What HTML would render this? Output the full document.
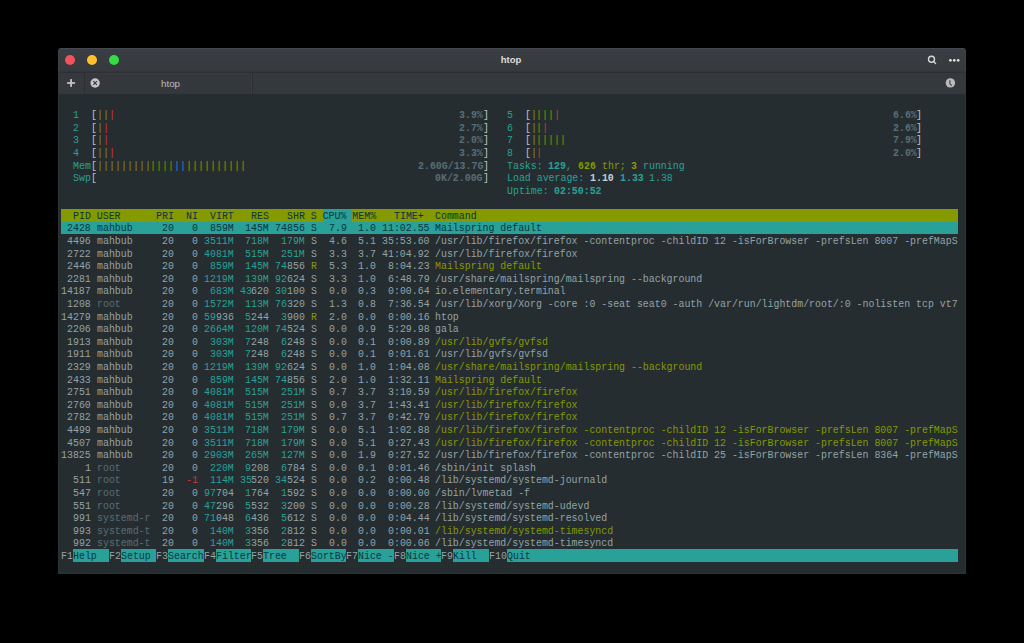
<!DOCTYPE html>
<html><head><meta charset="utf-8">
<style>
html,body{margin:0;padding:0;}
body{width:1024px;height:643px;background:#000;position:relative;overflow:hidden;font-family:"Liberation Sans",sans-serif;}
#win{position:absolute;left:58px;top:48px;width:908px;height:526px;background:#252d31;border-radius:4px 4px 0 0;overflow:hidden;box-shadow:inset 1px 0 0 #2c3336, inset -1px 0 0 #2c3336, inset 0 -1px 0 #2c3336;}
#title{position:absolute;left:0;top:0;width:908px;height:24px;background:linear-gradient(#3a3d42,#36393e);box-shadow:inset 0 1px 0 #444850, inset -1px 0 0 #3e4147, inset 1px 0 0 #3e4147;}
#tline{position:absolute;left:0;top:24px;width:908px;height:1px;background:#2d2f33;box-shadow:0 -0.5px 0.5px #313338;}
#tabs{position:absolute;left:0;top:25px;width:908px;height:21px;background:#35383c;}
#tab{position:absolute;left:27px;top:0;width:167px;height:21px;background:#34373b;box-shadow:inset 0 1px 0 #393c41, inset -1px 0 0 #3a3d42;border-radius:0 2px 0 0;}
#sep1{position:absolute;left:26px;top:0;width:1px;height:21px;background:#2c2e32;}
#sep2{position:absolute;left:194px;top:0;width:1px;height:21px;background:#2c2e32;}
.dot{position:absolute;width:10.6px;height:10.6px;border-radius:50%;top:6.7px;}
.ttl{position:absolute;left:-1px;width:908px;top:5.4px;text-align:center;color:#dedede;font-weight:bold;font-size:9.5px;line-height:14px;}
.tabl{position:absolute;left:103px;top:4.1px;color:#bdbdbd;font-size:9.8px;line-height:14px;}
.b{position:absolute;height:12.59px;}
.t{position:absolute;margin-top:0.8px;white-space:pre;font-family:"Liberation Mono",monospace;font-size:11px;line-height:12.59px;height:12.59px;overflow:visible;transform-origin:0 0;transform:scaleX(0.8996);}
.bd{font-weight:bold;}
svg{position:absolute;overflow:visible;}
</style></head><body>
<div id="win">
 <div id="title">
  <div class="dot" style="left:6.5px;background:#f4515a"></div>
  <div class="dot" style="left:28.7px;background:#fcc02c"></div>
  <div class="dot" style="left:50.9px;background:#33dd43"></div>
  <div class="ttl">htop</div>
  <svg style="left:0;top:0" width="908" height="24">
   <circle cx="873.5" cy="11.3" r="3.0" fill="none" stroke="#d6d6d6" stroke-width="1.4"/>
   <line x1="875.7" y1="13.5" x2="877.6" y2="15.6" stroke="#d6d6d6" stroke-width="1.4" stroke-linecap="round"/>
   <circle cx="892.4" cy="12.3" r="1.35" fill="#e0e0e0"/>
   <circle cx="896.3" cy="12.3" r="1.35" fill="#e0e0e0"/>
   <circle cx="900.2" cy="12.3" r="1.35" fill="#e0e0e0"/>
  </svg>
 </div>
 <div id="tline"></div>
 <div id="tabs">
  <div id="sep1"></div>
  <div id="tab"></div>
  <div id="sep2"></div>
  <div class="tabl">htop</div>
  <svg style="left:0;top:0" width="908" height="21">
   <rect x="9.1" y="9.1" width="8" height="1.8" fill="#c2c2c2"/>
   <rect x="12.2" y="6.1" width="1.8" height="7.8" fill="#c2c2c2"/>
   <circle cx="37.1" cy="10" r="4.7" fill="#c4c4c4"/>
   <line x1="35.3" y1="8.2" x2="38.9" y2="11.8" stroke="#35383c" stroke-width="1.1"/>
   <line x1="38.9" y1="8.2" x2="35.3" y2="11.8" stroke="#35383c" stroke-width="1.1"/>
   <circle cx="892.4" cy="9.9" r="4.7" fill="#bababa"/>
   <path d="M891.9 7.2 V10.8 L893.8 12.6" fill="none" stroke="#3a3d41" stroke-width="1.1"/>
  </svg>
 </div>
</div>
<div class="b" style="left:61.40px;top:209.10px;width:896.64px;background:#859900"></div>
<div class="b" style="left:322.67px;top:209.10px;width:29.69px;background:#2aa198"></div>
<div class="b" style="left:61.40px;top:221.70px;width:896.64px;background:#2aa198"></div>
<div class="b" style="left:73.28px;top:549.20px;width:35.63px;background:#2aa198"></div>
<div class="b" style="left:120.78px;top:549.20px;width:35.63px;background:#2aa198"></div>
<div class="b" style="left:168.28px;top:549.20px;width:35.63px;background:#2aa198"></div>
<div class="b" style="left:215.79px;top:549.20px;width:35.63px;background:#2aa198"></div>
<div class="b" style="left:263.29px;top:549.20px;width:35.63px;background:#2aa198"></div>
<div class="b" style="left:310.80px;top:549.20px;width:35.63px;background:#2aa198"></div>
<div class="b" style="left:358.30px;top:549.20px;width:35.63px;background:#2aa198"></div>
<div class="b" style="left:405.80px;top:549.20px;width:35.63px;background:#2aa198"></div>
<div class="b" style="left:453.31px;top:549.20px;width:35.63px;background:#2aa198"></div>
<div class="b" style="left:506.75px;top:549.20px;width:451.29px;background:#2aa198"></div>
<span class="t" style="left:73.28px;top:108.34px;color:#2aa198;width:5.94px">1</span>
<span class="t" style="left:91.09px;top:108.34px;color:#bcc4c6;width:5.94px">[</span>
<span class="t" style="left:97.03px;top:108.34px;color:#859900;width:5.94px">|</span>
<span class="t" style="left:102.97px;top:108.34px;color:#859900;width:5.94px">|</span>
<span class="t" style="left:108.90px;top:108.34px;color:#dc322f;width:5.94px">|</span>
<span class="t bd" style="left:459.25px;top:108.34px;color:#586e75;width:23.75px">3.9%</span>
<span class="t" style="left:483.00px;top:108.34px;color:#bcc4c6;width:5.94px">]</span>
<span class="t" style="left:506.75px;top:108.34px;color:#2aa198;width:5.94px">5</span>
<span class="t" style="left:524.56px;top:108.34px;color:#bcc4c6;width:5.94px">[</span>
<span class="t" style="left:530.50px;top:108.34px;color:#859900;width:5.94px">|</span>
<span class="t" style="left:536.44px;top:108.34px;color:#859900;width:5.94px">|</span>
<span class="t" style="left:542.38px;top:108.34px;color:#859900;width:5.94px">|</span>
<span class="t" style="left:548.32px;top:108.34px;color:#859900;width:5.94px">|</span>
<span class="t" style="left:554.25px;top:108.34px;color:#dc322f;width:5.94px">|</span>
<span class="t bd" style="left:892.72px;top:108.34px;color:#586e75;width:23.75px">6.6%</span>
<span class="t" style="left:916.47px;top:108.34px;color:#bcc4c6;width:5.94px">]</span>
<span class="t" style="left:73.28px;top:120.93px;color:#2aa198;width:5.94px">2</span>
<span class="t" style="left:91.09px;top:120.93px;color:#bcc4c6;width:5.94px">[</span>
<span class="t" style="left:97.03px;top:120.93px;color:#859900;width:5.94px">|</span>
<span class="t" style="left:102.97px;top:120.93px;color:#dc322f;width:5.94px">|</span>
<span class="t bd" style="left:459.25px;top:120.93px;color:#586e75;width:23.75px">2.7%</span>
<span class="t" style="left:483.00px;top:120.93px;color:#bcc4c6;width:5.94px">]</span>
<span class="t" style="left:506.75px;top:120.93px;color:#2aa198;width:5.94px">6</span>
<span class="t" style="left:524.56px;top:120.93px;color:#bcc4c6;width:5.94px">[</span>
<span class="t" style="left:530.50px;top:120.93px;color:#859900;width:5.94px">|</span>
<span class="t" style="left:536.44px;top:120.93px;color:#859900;width:5.94px">|</span>
<span class="t" style="left:542.38px;top:120.93px;color:#dc322f;width:5.94px">|</span>
<span class="t bd" style="left:892.72px;top:120.93px;color:#586e75;width:23.75px">2.6%</span>
<span class="t" style="left:916.47px;top:120.93px;color:#bcc4c6;width:5.94px">]</span>
<span class="t" style="left:73.28px;top:133.53px;color:#2aa198;width:5.94px">3</span>
<span class="t" style="left:91.09px;top:133.53px;color:#bcc4c6;width:5.94px">[</span>
<span class="t" style="left:97.03px;top:133.53px;color:#859900;width:5.94px">|</span>
<span class="t" style="left:102.97px;top:133.53px;color:#dc322f;width:5.94px">|</span>
<span class="t bd" style="left:459.25px;top:133.53px;color:#586e75;width:23.75px">2.0%</span>
<span class="t" style="left:483.00px;top:133.53px;color:#bcc4c6;width:5.94px">]</span>
<span class="t" style="left:506.75px;top:133.53px;color:#2aa198;width:5.94px">7</span>
<span class="t" style="left:524.56px;top:133.53px;color:#bcc4c6;width:5.94px">[</span>
<span class="t" style="left:530.50px;top:133.53px;color:#859900;width:5.94px">|</span>
<span class="t" style="left:536.44px;top:133.53px;color:#859900;width:5.94px">|</span>
<span class="t" style="left:542.38px;top:133.53px;color:#859900;width:5.94px">|</span>
<span class="t" style="left:548.32px;top:133.53px;color:#859900;width:5.94px">|</span>
<span class="t" style="left:554.25px;top:133.53px;color:#859900;width:5.94px">|</span>
<span class="t" style="left:560.19px;top:133.53px;color:#859900;width:5.94px">|</span>
<span class="t bd" style="left:892.72px;top:133.53px;color:#586e75;width:23.75px">7.9%</span>
<span class="t" style="left:916.47px;top:133.53px;color:#bcc4c6;width:5.94px">]</span>
<span class="t" style="left:73.28px;top:146.12px;color:#2aa198;width:5.94px">4</span>
<span class="t" style="left:91.09px;top:146.12px;color:#bcc4c6;width:5.94px">[</span>
<span class="t" style="left:97.03px;top:146.12px;color:#859900;width:5.94px">|</span>
<span class="t" style="left:102.97px;top:146.12px;color:#859900;width:5.94px">|</span>
<span class="t" style="left:108.90px;top:146.12px;color:#dc322f;width:5.94px">|</span>
<span class="t bd" style="left:459.25px;top:146.12px;color:#586e75;width:23.75px">3.3%</span>
<span class="t" style="left:483.00px;top:146.12px;color:#bcc4c6;width:5.94px">]</span>
<span class="t" style="left:506.75px;top:146.12px;color:#2aa198;width:5.94px">8</span>
<span class="t" style="left:524.56px;top:146.12px;color:#bcc4c6;width:5.94px">[</span>
<span class="t" style="left:530.50px;top:146.12px;color:#859900;width:5.94px">|</span>
<span class="t" style="left:536.44px;top:146.12px;color:#dc322f;width:5.94px">|</span>
<span class="t bd" style="left:892.72px;top:146.12px;color:#586e75;width:23.75px">2.0%</span>
<span class="t" style="left:916.47px;top:146.12px;color:#bcc4c6;width:5.94px">]</span>
<span class="t" style="left:73.28px;top:158.72px;color:#2aa198;width:17.81px">Mem</span>
<span class="t" style="left:91.09px;top:158.72px;color:#bcc4c6;width:5.94px">[</span>
<span class="t" style="left:97.03px;top:158.72px;color:#859900;width:5.94px">|</span>
<span class="t" style="left:102.97px;top:158.72px;color:#859900;width:5.94px">|</span>
<span class="t" style="left:108.90px;top:158.72px;color:#859900;width:5.94px">|</span>
<span class="t" style="left:114.84px;top:158.72px;color:#859900;width:5.94px">|</span>
<span class="t" style="left:120.78px;top:158.72px;color:#859900;width:5.94px">|</span>
<span class="t" style="left:126.72px;top:158.72px;color:#859900;width:5.94px">|</span>
<span class="t" style="left:132.66px;top:158.72px;color:#859900;width:5.94px">|</span>
<span class="t" style="left:138.59px;top:158.72px;color:#859900;width:5.94px">|</span>
<span class="t" style="left:144.53px;top:158.72px;color:#859900;width:5.94px">|</span>
<span class="t" style="left:150.47px;top:158.72px;color:#859900;width:5.94px">|</span>
<span class="t" style="left:156.41px;top:158.72px;color:#859900;width:5.94px">|</span>
<span class="t" style="left:162.35px;top:158.72px;color:#859900;width:5.94px">|</span>
<span class="t" style="left:168.28px;top:158.72px;color:#859900;width:5.94px">|</span>
<span class="t" style="left:174.22px;top:158.72px;color:#268bd2;width:5.94px">|</span>
<span class="t" style="left:180.16px;top:158.72px;color:#268bd2;width:5.94px">|</span>
<span class="t" style="left:186.10px;top:158.72px;color:#b58900;width:5.94px">|</span>
<span class="t" style="left:192.04px;top:158.72px;color:#b58900;width:5.94px">|</span>
<span class="t" style="left:197.97px;top:158.72px;color:#b58900;width:5.94px">|</span>
<span class="t" style="left:203.91px;top:158.72px;color:#b58900;width:5.94px">|</span>
<span class="t" style="left:209.85px;top:158.72px;color:#b58900;width:5.94px">|</span>
<span class="t" style="left:215.79px;top:158.72px;color:#b58900;width:5.94px">|</span>
<span class="t" style="left:221.73px;top:158.72px;color:#b58900;width:5.94px">|</span>
<span class="t" style="left:227.66px;top:158.72px;color:#b58900;width:5.94px">|</span>
<span class="t" style="left:233.60px;top:158.72px;color:#b58900;width:5.94px">|</span>
<span class="t" style="left:239.54px;top:158.72px;color:#b58900;width:5.94px">|</span>
<span class="t bd" style="left:417.68px;top:158.72px;color:#586e75;width:65.32px">2.60G/13.7G</span>
<span class="t" style="left:483.00px;top:158.72px;color:#bcc4c6;width:5.94px">]</span>
<span class="t" style="left:506.75px;top:158.72px;color:#2aa198;width:35.63px">Tasks:</span>
<span class="t bd" style="left:548.32px;top:158.72px;color:#2aa198;width:17.81px">129</span>
<span class="t" style="left:566.13px;top:158.72px;color:#2aa198;width:5.94px">,</span>
<span class="t bd" style="left:578.01px;top:158.72px;color:#859900;width:17.81px">626</span>
<span class="t" style="left:601.76px;top:158.72px;color:#859900;width:23.75px">thr;</span>
<span class="t bd" style="left:631.45px;top:158.72px;color:#859900;width:5.94px">3</span>
<span class="t" style="left:643.32px;top:158.72px;color:#2aa198;width:41.57px">running</span>
<span class="t" style="left:73.28px;top:171.32px;color:#2aa198;width:17.81px">Swp</span>
<span class="t" style="left:91.09px;top:171.32px;color:#bcc4c6;width:5.94px">[</span>
<span class="t bd" style="left:435.49px;top:171.32px;color:#586e75;width:47.50px">0K/2.00G</span>
<span class="t" style="left:483.00px;top:171.32px;color:#bcc4c6;width:5.94px">]</span>
<span class="t" style="left:506.75px;top:171.32px;color:#2aa198;width:77.19px">Load average:</span>
<span class="t bd" style="left:589.88px;top:171.32px;color:#c9d1d3;width:23.75px">1.10</span>
<span class="t bd" style="left:619.57px;top:171.32px;color:#2aa198;width:23.75px">1.33</span>
<span class="t" style="left:649.26px;top:171.32px;color:#2aa198;width:23.75px">1.38</span>
<span class="t" style="left:506.75px;top:183.91px;color:#2aa198;width:41.57px">Uptime:</span>
<span class="t bd" style="left:554.25px;top:183.91px;color:#2aa198;width:47.50px">02:50:52</span>
<span class="t" style="left:73.28px;top:209.10px;color:#073642;width:47.50px">PID USER</span>
<span class="t" style="left:156.41px;top:209.10px;color:#073642;width:17.81px">PRI</span>
<span class="t" style="left:186.10px;top:209.10px;color:#073642;width:11.88px">NI</span>
<span class="t" style="left:209.85px;top:209.10px;color:#073642;width:23.75px">VIRT</span>
<span class="t" style="left:251.42px;top:209.10px;color:#073642;width:17.81px">RES</span>
<span class="t" style="left:287.04px;top:209.10px;color:#073642;width:89.07px">SHR S CPU% MEM%</span>
<span class="t" style="left:393.93px;top:209.10px;color:#073642;width:29.69px">TIME+</span>
<span class="t" style="left:435.49px;top:209.10px;color:#073642;width:41.57px">Command</span>
<span class="t" style="left:67.34px;top:221.70px;color:#073642;width:23.75px">2428</span>
<span class="t" style="left:97.03px;top:221.70px;color:#073642;width:35.63px">mahbub</span>
<span class="t" style="left:162.35px;top:221.70px;color:#073642;width:11.88px">20</span>
<span class="t" style="left:192.04px;top:221.70px;color:#073642;width:5.94px">0</span>
<span class="t" style="left:209.85px;top:221.70px;color:#073642;width:23.75px">859M</span>
<span class="t" style="left:245.48px;top:221.70px;color:#073642;width:23.75px">145M</span>
<span class="t" style="left:275.17px;top:221.70px;color:#073642;width:11.88px">74</span>
<span class="t" style="left:287.04px;top:221.70px;color:#073642;width:17.81px">856</span>
<span class="t" style="left:310.80px;top:221.70px;color:#073642;width:5.94px">S</span>
<span class="t" style="left:328.61px;top:221.70px;color:#073642;width:17.81px">7.9</span>
<span class="t" style="left:358.30px;top:221.70px;color:#073642;width:17.81px">1.0</span>
<span class="t" style="left:382.05px;top:221.70px;color:#073642;width:47.50px">11:02.55</span>
<span class="t" style="left:435.49px;top:221.70px;color:#073642;width:106.88px">Mailspring default</span>
<span class="t" style="left:67.34px;top:234.30px;color:#94a3a5;width:23.75px">4496</span>
<span class="t" style="left:97.03px;top:234.30px;color:#94a3a5;width:35.63px">mahbub</span>
<span class="t" style="left:162.35px;top:234.30px;color:#94a3a5;width:11.88px">20</span>
<span class="t" style="left:192.04px;top:234.30px;color:#94a3a5;width:5.94px">0</span>
<span class="t" style="left:203.91px;top:234.30px;color:#2aa198;width:29.69px">3511M</span>
<span class="t" style="left:245.48px;top:234.30px;color:#2aa198;width:23.75px">718M</span>
<span class="t" style="left:281.11px;top:234.30px;color:#2aa198;width:23.75px">179M</span>
<span class="t" style="left:310.80px;top:234.30px;color:#94a3a5;width:5.94px">S</span>
<span class="t" style="left:328.61px;top:234.30px;color:#94a3a5;width:17.81px">4.6</span>
<span class="t" style="left:358.30px;top:234.30px;color:#94a3a5;width:17.81px">5.1</span>
<span class="t" style="left:382.05px;top:234.30px;color:#94a3a5;width:47.50px">35:53.60</span>
<span class="t" style="left:435.49px;top:234.30px;color:#94a3a5;width:522.54px">/usr/lib/firefox/firefox -contentproc -childID 12 -isForBrowser -prefsLen 8007 -prefMapS</span>
<span class="t" style="left:67.34px;top:246.89px;color:#94a3a5;width:23.75px">2722</span>
<span class="t" style="left:97.03px;top:246.89px;color:#94a3a5;width:35.63px">mahbub</span>
<span class="t" style="left:162.35px;top:246.89px;color:#94a3a5;width:11.88px">20</span>
<span class="t" style="left:192.04px;top:246.89px;color:#94a3a5;width:5.94px">0</span>
<span class="t" style="left:203.91px;top:246.89px;color:#2aa198;width:29.69px">4081M</span>
<span class="t" style="left:245.48px;top:246.89px;color:#2aa198;width:23.75px">515M</span>
<span class="t" style="left:281.11px;top:246.89px;color:#2aa198;width:23.75px">251M</span>
<span class="t" style="left:310.80px;top:246.89px;color:#94a3a5;width:5.94px">S</span>
<span class="t" style="left:328.61px;top:246.89px;color:#94a3a5;width:17.81px">3.3</span>
<span class="t" style="left:358.30px;top:246.89px;color:#94a3a5;width:17.81px">3.7</span>
<span class="t" style="left:382.05px;top:246.89px;color:#94a3a5;width:47.50px">41:04.92</span>
<span class="t" style="left:435.49px;top:246.89px;color:#94a3a5;width:142.51px">/usr/lib/firefox/firefox</span>
<span class="t" style="left:67.34px;top:259.49px;color:#94a3a5;width:23.75px">2446</span>
<span class="t" style="left:97.03px;top:259.49px;color:#94a3a5;width:35.63px">mahbub</span>
<span class="t" style="left:162.35px;top:259.49px;color:#94a3a5;width:11.88px">20</span>
<span class="t" style="left:192.04px;top:259.49px;color:#94a3a5;width:5.94px">0</span>
<span class="t" style="left:209.85px;top:259.49px;color:#2aa198;width:23.75px">859M</span>
<span class="t" style="left:245.48px;top:259.49px;color:#2aa198;width:23.75px">145M</span>
<span class="t" style="left:275.17px;top:259.49px;color:#2aa198;width:11.88px">74</span>
<span class="t" style="left:287.04px;top:259.49px;color:#94a3a5;width:17.81px">856</span>
<span class="t" style="left:310.80px;top:259.49px;color:#859900;width:5.94px">R</span>
<span class="t" style="left:328.61px;top:259.49px;color:#94a3a5;width:17.81px">5.3</span>
<span class="t" style="left:358.30px;top:259.49px;color:#94a3a5;width:17.81px">1.0</span>
<span class="t" style="left:387.99px;top:259.49px;color:#94a3a5;width:41.57px">8:04.23</span>
<span class="t" style="left:435.49px;top:259.49px;color:#859900;width:106.88px">Mailspring default</span>
<span class="t" style="left:67.34px;top:272.08px;color:#94a3a5;width:23.75px">2281</span>
<span class="t" style="left:97.03px;top:272.08px;color:#94a3a5;width:35.63px">mahbub</span>
<span class="t" style="left:162.35px;top:272.08px;color:#94a3a5;width:11.88px">20</span>
<span class="t" style="left:192.04px;top:272.08px;color:#94a3a5;width:5.94px">0</span>
<span class="t" style="left:203.91px;top:272.08px;color:#2aa198;width:29.69px">1219M</span>
<span class="t" style="left:245.48px;top:272.08px;color:#2aa198;width:23.75px">139M</span>
<span class="t" style="left:275.17px;top:272.08px;color:#2aa198;width:11.88px">92</span>
<span class="t" style="left:287.04px;top:272.08px;color:#94a3a5;width:17.81px">624</span>
<span class="t" style="left:310.80px;top:272.08px;color:#94a3a5;width:5.94px">S</span>
<span class="t" style="left:328.61px;top:272.08px;color:#94a3a5;width:17.81px">3.3</span>
<span class="t" style="left:358.30px;top:272.08px;color:#94a3a5;width:17.81px">1.0</span>
<span class="t" style="left:387.99px;top:272.08px;color:#94a3a5;width:41.57px">6:48.79</span>
<span class="t" style="left:435.49px;top:272.08px;color:#94a3a5;width:267.21px">/usr/share/mailspring/mailspring --background</span>
<span class="t" style="left:61.40px;top:284.68px;color:#94a3a5;width:29.69px">14187</span>
<span class="t" style="left:97.03px;top:284.68px;color:#94a3a5;width:35.63px">mahbub</span>
<span class="t" style="left:162.35px;top:284.68px;color:#94a3a5;width:11.88px">20</span>
<span class="t" style="left:192.04px;top:284.68px;color:#94a3a5;width:5.94px">0</span>
<span class="t" style="left:209.85px;top:284.68px;color:#2aa198;width:23.75px">683M</span>
<span class="t" style="left:239.54px;top:284.68px;color:#2aa198;width:11.88px">43</span>
<span class="t" style="left:251.42px;top:284.68px;color:#94a3a5;width:17.81px">620</span>
<span class="t" style="left:275.17px;top:284.68px;color:#2aa198;width:11.88px">30</span>
<span class="t" style="left:287.04px;top:284.68px;color:#94a3a5;width:17.81px">100</span>
<span class="t" style="left:310.80px;top:284.68px;color:#94a3a5;width:5.94px">S</span>
<span class="t" style="left:328.61px;top:284.68px;color:#94a3a5;width:17.81px">0.0</span>
<span class="t" style="left:358.30px;top:284.68px;color:#94a3a5;width:17.81px">0.3</span>
<span class="t" style="left:387.99px;top:284.68px;color:#94a3a5;width:41.57px">0:00.64</span>
<span class="t" style="left:435.49px;top:284.68px;color:#94a3a5;width:130.64px">io.elementary.terminal</span>
<span class="t" style="left:67.34px;top:297.28px;color:#94a3a5;width:23.75px">1208</span>
<span class="t" style="left:97.03px;top:297.28px;color:#586e75;width:23.75px">root</span>
<span class="t" style="left:162.35px;top:297.28px;color:#94a3a5;width:11.88px">20</span>
<span class="t" style="left:192.04px;top:297.28px;color:#94a3a5;width:5.94px">0</span>
<span class="t" style="left:203.91px;top:297.28px;color:#2aa198;width:29.69px">1572M</span>
<span class="t" style="left:245.48px;top:297.28px;color:#2aa198;width:23.75px">113M</span>
<span class="t" style="left:275.17px;top:297.28px;color:#2aa198;width:11.88px">76</span>
<span class="t" style="left:287.04px;top:297.28px;color:#94a3a5;width:17.81px">320</span>
<span class="t" style="left:310.80px;top:297.28px;color:#94a3a5;width:5.94px">S</span>
<span class="t" style="left:328.61px;top:297.28px;color:#94a3a5;width:17.81px">1.3</span>
<span class="t" style="left:358.30px;top:297.28px;color:#94a3a5;width:17.81px">0.8</span>
<span class="t" style="left:387.99px;top:297.28px;color:#94a3a5;width:41.57px">7:36.54</span>
<span class="t" style="left:435.49px;top:297.28px;color:#94a3a5;width:522.54px">/usr/lib/xorg/Xorg -core :0 -seat seat0 -auth /var/run/lightdm/root/:0 -nolisten tcp vt7</span>
<span class="t" style="left:61.40px;top:309.87px;color:#94a3a5;width:29.69px">14279</span>
<span class="t" style="left:97.03px;top:309.87px;color:#94a3a5;width:35.63px">mahbub</span>
<span class="t" style="left:162.35px;top:309.87px;color:#94a3a5;width:11.88px">20</span>
<span class="t" style="left:192.04px;top:309.87px;color:#94a3a5;width:5.94px">0</span>
<span class="t" style="left:203.91px;top:309.87px;color:#2aa198;width:11.88px">59</span>
<span class="t" style="left:215.79px;top:309.87px;color:#94a3a5;width:17.81px">936</span>
<span class="t" style="left:245.48px;top:309.87px;color:#2aa198;width:5.94px">5</span>
<span class="t" style="left:251.42px;top:309.87px;color:#94a3a5;width:17.81px">244</span>
<span class="t" style="left:281.11px;top:309.87px;color:#2aa198;width:5.94px">3</span>
<span class="t" style="left:287.04px;top:309.87px;color:#94a3a5;width:17.81px">900</span>
<span class="t" style="left:310.80px;top:309.87px;color:#859900;width:5.94px">R</span>
<span class="t" style="left:328.61px;top:309.87px;color:#94a3a5;width:17.81px">2.0</span>
<span class="t" style="left:358.30px;top:309.87px;color:#94a3a5;width:17.81px">0.0</span>
<span class="t" style="left:387.99px;top:309.87px;color:#94a3a5;width:41.57px">0:00.16</span>
<span class="t" style="left:435.49px;top:309.87px;color:#94a3a5;width:23.75px">htop</span>
<span class="t" style="left:67.34px;top:322.47px;color:#94a3a5;width:23.75px">2206</span>
<span class="t" style="left:97.03px;top:322.47px;color:#94a3a5;width:35.63px">mahbub</span>
<span class="t" style="left:162.35px;top:322.47px;color:#94a3a5;width:11.88px">20</span>
<span class="t" style="left:192.04px;top:322.47px;color:#94a3a5;width:5.94px">0</span>
<span class="t" style="left:203.91px;top:322.47px;color:#2aa198;width:29.69px">2664M</span>
<span class="t" style="left:245.48px;top:322.47px;color:#2aa198;width:23.75px">120M</span>
<span class="t" style="left:275.17px;top:322.47px;color:#2aa198;width:11.88px">74</span>
<span class="t" style="left:287.04px;top:322.47px;color:#94a3a5;width:17.81px">524</span>
<span class="t" style="left:310.80px;top:322.47px;color:#94a3a5;width:5.94px">S</span>
<span class="t" style="left:328.61px;top:322.47px;color:#94a3a5;width:17.81px">0.0</span>
<span class="t" style="left:358.30px;top:322.47px;color:#94a3a5;width:17.81px">0.9</span>
<span class="t" style="left:387.99px;top:322.47px;color:#94a3a5;width:41.57px">5:29.98</span>
<span class="t" style="left:435.49px;top:322.47px;color:#94a3a5;width:23.75px">gala</span>
<span class="t" style="left:67.34px;top:335.06px;color:#94a3a5;width:23.75px">1913</span>
<span class="t" style="left:97.03px;top:335.06px;color:#94a3a5;width:35.63px">mahbub</span>
<span class="t" style="left:162.35px;top:335.06px;color:#94a3a5;width:11.88px">20</span>
<span class="t" style="left:192.04px;top:335.06px;color:#94a3a5;width:5.94px">0</span>
<span class="t" style="left:209.85px;top:335.06px;color:#2aa198;width:23.75px">303M</span>
<span class="t" style="left:245.48px;top:335.06px;color:#2aa198;width:5.94px">7</span>
<span class="t" style="left:251.42px;top:335.06px;color:#94a3a5;width:17.81px">248</span>
<span class="t" style="left:281.11px;top:335.06px;color:#2aa198;width:5.94px">6</span>
<span class="t" style="left:287.04px;top:335.06px;color:#94a3a5;width:17.81px">248</span>
<span class="t" style="left:310.80px;top:335.06px;color:#94a3a5;width:5.94px">S</span>
<span class="t" style="left:328.61px;top:335.06px;color:#94a3a5;width:17.81px">0.0</span>
<span class="t" style="left:358.30px;top:335.06px;color:#94a3a5;width:17.81px">0.1</span>
<span class="t" style="left:387.99px;top:335.06px;color:#94a3a5;width:41.57px">0:00.89</span>
<span class="t" style="left:435.49px;top:335.06px;color:#859900;width:112.82px">/usr/lib/gvfs/gvfsd</span>
<span class="t" style="left:67.34px;top:347.66px;color:#94a3a5;width:23.75px">1911</span>
<span class="t" style="left:97.03px;top:347.66px;color:#94a3a5;width:35.63px">mahbub</span>
<span class="t" style="left:162.35px;top:347.66px;color:#94a3a5;width:11.88px">20</span>
<span class="t" style="left:192.04px;top:347.66px;color:#94a3a5;width:5.94px">0</span>
<span class="t" style="left:209.85px;top:347.66px;color:#2aa198;width:23.75px">303M</span>
<span class="t" style="left:245.48px;top:347.66px;color:#2aa198;width:5.94px">7</span>
<span class="t" style="left:251.42px;top:347.66px;color:#94a3a5;width:17.81px">248</span>
<span class="t" style="left:281.11px;top:347.66px;color:#2aa198;width:5.94px">6</span>
<span class="t" style="left:287.04px;top:347.66px;color:#94a3a5;width:17.81px">248</span>
<span class="t" style="left:310.80px;top:347.66px;color:#94a3a5;width:5.94px">S</span>
<span class="t" style="left:328.61px;top:347.66px;color:#94a3a5;width:17.81px">0.0</span>
<span class="t" style="left:358.30px;top:347.66px;color:#94a3a5;width:17.81px">0.1</span>
<span class="t" style="left:387.99px;top:347.66px;color:#94a3a5;width:41.57px">0:01.61</span>
<span class="t" style="left:435.49px;top:347.66px;color:#94a3a5;width:112.82px">/usr/lib/gvfs/gvfsd</span>
<span class="t" style="left:67.34px;top:360.26px;color:#94a3a5;width:23.75px">2329</span>
<span class="t" style="left:97.03px;top:360.26px;color:#94a3a5;width:35.63px">mahbub</span>
<span class="t" style="left:162.35px;top:360.26px;color:#94a3a5;width:11.88px">20</span>
<span class="t" style="left:192.04px;top:360.26px;color:#94a3a5;width:5.94px">0</span>
<span class="t" style="left:203.91px;top:360.26px;color:#2aa198;width:29.69px">1219M</span>
<span class="t" style="left:245.48px;top:360.26px;color:#2aa198;width:23.75px">139M</span>
<span class="t" style="left:275.17px;top:360.26px;color:#2aa198;width:11.88px">92</span>
<span class="t" style="left:287.04px;top:360.26px;color:#94a3a5;width:17.81px">624</span>
<span class="t" style="left:310.80px;top:360.26px;color:#94a3a5;width:5.94px">S</span>
<span class="t" style="left:328.61px;top:360.26px;color:#94a3a5;width:17.81px">0.0</span>
<span class="t" style="left:358.30px;top:360.26px;color:#94a3a5;width:17.81px">1.0</span>
<span class="t" style="left:387.99px;top:360.26px;color:#94a3a5;width:41.57px">1:04.08</span>
<span class="t" style="left:435.49px;top:360.26px;color:#859900;width:267.21px">/usr/share/mailspring/mailspring --background</span>
<span class="t" style="left:67.34px;top:372.85px;color:#94a3a5;width:23.75px">2433</span>
<span class="t" style="left:97.03px;top:372.85px;color:#94a3a5;width:35.63px">mahbub</span>
<span class="t" style="left:162.35px;top:372.85px;color:#94a3a5;width:11.88px">20</span>
<span class="t" style="left:192.04px;top:372.85px;color:#94a3a5;width:5.94px">0</span>
<span class="t" style="left:209.85px;top:372.85px;color:#2aa198;width:23.75px">859M</span>
<span class="t" style="left:245.48px;top:372.85px;color:#2aa198;width:23.75px">145M</span>
<span class="t" style="left:275.17px;top:372.85px;color:#2aa198;width:11.88px">74</span>
<span class="t" style="left:287.04px;top:372.85px;color:#94a3a5;width:17.81px">856</span>
<span class="t" style="left:310.80px;top:372.85px;color:#94a3a5;width:5.94px">S</span>
<span class="t" style="left:328.61px;top:372.85px;color:#94a3a5;width:17.81px">2.0</span>
<span class="t" style="left:358.30px;top:372.85px;color:#94a3a5;width:17.81px">1.0</span>
<span class="t" style="left:387.99px;top:372.85px;color:#94a3a5;width:41.57px">1:32.11</span>
<span class="t" style="left:435.49px;top:372.85px;color:#859900;width:106.88px">Mailspring default</span>
<span class="t" style="left:67.34px;top:385.45px;color:#94a3a5;width:23.75px">2751</span>
<span class="t" style="left:97.03px;top:385.45px;color:#94a3a5;width:35.63px">mahbub</span>
<span class="t" style="left:162.35px;top:385.45px;color:#94a3a5;width:11.88px">20</span>
<span class="t" style="left:192.04px;top:385.45px;color:#94a3a5;width:5.94px">0</span>
<span class="t" style="left:203.91px;top:385.45px;color:#2aa198;width:29.69px">4081M</span>
<span class="t" style="left:245.48px;top:385.45px;color:#2aa198;width:23.75px">515M</span>
<span class="t" style="left:281.11px;top:385.45px;color:#2aa198;width:23.75px">251M</span>
<span class="t" style="left:310.80px;top:385.45px;color:#94a3a5;width:5.94px">S</span>
<span class="t" style="left:328.61px;top:385.45px;color:#94a3a5;width:17.81px">0.7</span>
<span class="t" style="left:358.30px;top:385.45px;color:#94a3a5;width:17.81px">3.7</span>
<span class="t" style="left:387.99px;top:385.45px;color:#94a3a5;width:41.57px">3:10.59</span>
<span class="t" style="left:435.49px;top:385.45px;color:#859900;width:142.51px">/usr/lib/firefox/firefox</span>
<span class="t" style="left:67.34px;top:398.04px;color:#94a3a5;width:23.75px">2760</span>
<span class="t" style="left:97.03px;top:398.04px;color:#94a3a5;width:35.63px">mahbub</span>
<span class="t" style="left:162.35px;top:398.04px;color:#94a3a5;width:11.88px">20</span>
<span class="t" style="left:192.04px;top:398.04px;color:#94a3a5;width:5.94px">0</span>
<span class="t" style="left:203.91px;top:398.04px;color:#2aa198;width:29.69px">4081M</span>
<span class="t" style="left:245.48px;top:398.04px;color:#2aa198;width:23.75px">515M</span>
<span class="t" style="left:281.11px;top:398.04px;color:#2aa198;width:23.75px">251M</span>
<span class="t" style="left:310.80px;top:398.04px;color:#94a3a5;width:5.94px">S</span>
<span class="t" style="left:328.61px;top:398.04px;color:#94a3a5;width:17.81px">0.0</span>
<span class="t" style="left:358.30px;top:398.04px;color:#94a3a5;width:17.81px">3.7</span>
<span class="t" style="left:387.99px;top:398.04px;color:#94a3a5;width:41.57px">1:43.41</span>
<span class="t" style="left:435.49px;top:398.04px;color:#859900;width:142.51px">/usr/lib/firefox/firefox</span>
<span class="t" style="left:67.34px;top:410.64px;color:#94a3a5;width:23.75px">2782</span>
<span class="t" style="left:97.03px;top:410.64px;color:#94a3a5;width:35.63px">mahbub</span>
<span class="t" style="left:162.35px;top:410.64px;color:#94a3a5;width:11.88px">20</span>
<span class="t" style="left:192.04px;top:410.64px;color:#94a3a5;width:5.94px">0</span>
<span class="t" style="left:203.91px;top:410.64px;color:#2aa198;width:29.69px">4081M</span>
<span class="t" style="left:245.48px;top:410.64px;color:#2aa198;width:23.75px">515M</span>
<span class="t" style="left:281.11px;top:410.64px;color:#2aa198;width:23.75px">251M</span>
<span class="t" style="left:310.80px;top:410.64px;color:#94a3a5;width:5.94px">S</span>
<span class="t" style="left:328.61px;top:410.64px;color:#94a3a5;width:17.81px">0.7</span>
<span class="t" style="left:358.30px;top:410.64px;color:#94a3a5;width:17.81px">3.7</span>
<span class="t" style="left:387.99px;top:410.64px;color:#94a3a5;width:41.57px">0:42.79</span>
<span class="t" style="left:435.49px;top:410.64px;color:#859900;width:142.51px">/usr/lib/firefox/firefox</span>
<span class="t" style="left:67.34px;top:423.24px;color:#94a3a5;width:23.75px">4499</span>
<span class="t" style="left:97.03px;top:423.24px;color:#94a3a5;width:35.63px">mahbub</span>
<span class="t" style="left:162.35px;top:423.24px;color:#94a3a5;width:11.88px">20</span>
<span class="t" style="left:192.04px;top:423.24px;color:#94a3a5;width:5.94px">0</span>
<span class="t" style="left:203.91px;top:423.24px;color:#2aa198;width:29.69px">3511M</span>
<span class="t" style="left:245.48px;top:423.24px;color:#2aa198;width:23.75px">718M</span>
<span class="t" style="left:281.11px;top:423.24px;color:#2aa198;width:23.75px">179M</span>
<span class="t" style="left:310.80px;top:423.24px;color:#94a3a5;width:5.94px">S</span>
<span class="t" style="left:328.61px;top:423.24px;color:#94a3a5;width:17.81px">0.0</span>
<span class="t" style="left:358.30px;top:423.24px;color:#94a3a5;width:17.81px">5.1</span>
<span class="t" style="left:387.99px;top:423.24px;color:#94a3a5;width:41.57px">1:02.88</span>
<span class="t" style="left:435.49px;top:423.24px;color:#859900;width:522.54px">/usr/lib/firefox/firefox -contentproc -childID 12 -isForBrowser -prefsLen 8007 -prefMapS</span>
<span class="t" style="left:67.34px;top:435.83px;color:#94a3a5;width:23.75px">4507</span>
<span class="t" style="left:97.03px;top:435.83px;color:#94a3a5;width:35.63px">mahbub</span>
<span class="t" style="left:162.35px;top:435.83px;color:#94a3a5;width:11.88px">20</span>
<span class="t" style="left:192.04px;top:435.83px;color:#94a3a5;width:5.94px">0</span>
<span class="t" style="left:203.91px;top:435.83px;color:#2aa198;width:29.69px">3511M</span>
<span class="t" style="left:245.48px;top:435.83px;color:#2aa198;width:23.75px">718M</span>
<span class="t" style="left:281.11px;top:435.83px;color:#2aa198;width:23.75px">179M</span>
<span class="t" style="left:310.80px;top:435.83px;color:#94a3a5;width:5.94px">S</span>
<span class="t" style="left:328.61px;top:435.83px;color:#94a3a5;width:17.81px">0.0</span>
<span class="t" style="left:358.30px;top:435.83px;color:#94a3a5;width:17.81px">5.1</span>
<span class="t" style="left:387.99px;top:435.83px;color:#94a3a5;width:41.57px">0:27.43</span>
<span class="t" style="left:435.49px;top:435.83px;color:#859900;width:522.54px">/usr/lib/firefox/firefox -contentproc -childID 12 -isForBrowser -prefsLen 8007 -prefMapS</span>
<span class="t" style="left:61.40px;top:448.43px;color:#94a3a5;width:29.69px">13825</span>
<span class="t" style="left:97.03px;top:448.43px;color:#94a3a5;width:35.63px">mahbub</span>
<span class="t" style="left:162.35px;top:448.43px;color:#94a3a5;width:11.88px">20</span>
<span class="t" style="left:192.04px;top:448.43px;color:#94a3a5;width:5.94px">0</span>
<span class="t" style="left:203.91px;top:448.43px;color:#2aa198;width:29.69px">2903M</span>
<span class="t" style="left:245.48px;top:448.43px;color:#2aa198;width:23.75px">265M</span>
<span class="t" style="left:281.11px;top:448.43px;color:#2aa198;width:23.75px">127M</span>
<span class="t" style="left:310.80px;top:448.43px;color:#94a3a5;width:5.94px">S</span>
<span class="t" style="left:328.61px;top:448.43px;color:#94a3a5;width:17.81px">0.0</span>
<span class="t" style="left:358.30px;top:448.43px;color:#94a3a5;width:17.81px">1.9</span>
<span class="t" style="left:387.99px;top:448.43px;color:#94a3a5;width:41.57px">0:27.52</span>
<span class="t" style="left:435.49px;top:448.43px;color:#94a3a5;width:522.54px">/usr/lib/firefox/firefox -contentproc -childID 25 -isForBrowser -prefsLen 8364 -prefMapS</span>
<span class="t" style="left:85.15px;top:461.02px;color:#94a3a5;width:5.94px">1</span>
<span class="t" style="left:97.03px;top:461.02px;color:#586e75;width:23.75px">root</span>
<span class="t" style="left:162.35px;top:461.02px;color:#94a3a5;width:11.88px">20</span>
<span class="t" style="left:192.04px;top:461.02px;color:#94a3a5;width:5.94px">0</span>
<span class="t" style="left:209.85px;top:461.02px;color:#2aa198;width:23.75px">220M</span>
<span class="t" style="left:245.48px;top:461.02px;color:#2aa198;width:5.94px">9</span>
<span class="t" style="left:251.42px;top:461.02px;color:#94a3a5;width:17.81px">208</span>
<span class="t" style="left:281.11px;top:461.02px;color:#2aa198;width:5.94px">6</span>
<span class="t" style="left:287.04px;top:461.02px;color:#94a3a5;width:17.81px">784</span>
<span class="t" style="left:310.80px;top:461.02px;color:#94a3a5;width:5.94px">S</span>
<span class="t" style="left:328.61px;top:461.02px;color:#94a3a5;width:17.81px">0.0</span>
<span class="t" style="left:358.30px;top:461.02px;color:#94a3a5;width:17.81px">0.1</span>
<span class="t" style="left:387.99px;top:461.02px;color:#94a3a5;width:41.57px">0:01.46</span>
<span class="t" style="left:435.49px;top:461.02px;color:#94a3a5;width:100.95px">/sbin/init splash</span>
<span class="t" style="left:73.28px;top:473.62px;color:#94a3a5;width:17.81px">511</span>
<span class="t" style="left:97.03px;top:473.62px;color:#586e75;width:23.75px">root</span>
<span class="t" style="left:162.35px;top:473.62px;color:#94a3a5;width:11.88px">19</span>
<span class="t" style="left:186.10px;top:473.62px;color:#dc322f;width:11.88px">-1</span>
<span class="t" style="left:209.85px;top:473.62px;color:#2aa198;width:23.75px">114M</span>
<span class="t" style="left:239.54px;top:473.62px;color:#2aa198;width:11.88px">35</span>
<span class="t" style="left:251.42px;top:473.62px;color:#94a3a5;width:17.81px">520</span>
<span class="t" style="left:275.17px;top:473.62px;color:#2aa198;width:11.88px">34</span>
<span class="t" style="left:287.04px;top:473.62px;color:#94a3a5;width:17.81px">524</span>
<span class="t" style="left:310.80px;top:473.62px;color:#94a3a5;width:5.94px">S</span>
<span class="t" style="left:328.61px;top:473.62px;color:#94a3a5;width:17.81px">0.0</span>
<span class="t" style="left:358.30px;top:473.62px;color:#94a3a5;width:17.81px">0.2</span>
<span class="t" style="left:387.99px;top:473.62px;color:#94a3a5;width:41.57px">0:00.48</span>
<span class="t" style="left:435.49px;top:473.62px;color:#94a3a5;width:172.20px">/lib/systemd/systemd-journald</span>
<span class="t" style="left:73.28px;top:486.22px;color:#94a3a5;width:17.81px">547</span>
<span class="t" style="left:97.03px;top:486.22px;color:#586e75;width:23.75px">root</span>
<span class="t" style="left:162.35px;top:486.22px;color:#94a3a5;width:11.88px">20</span>
<span class="t" style="left:192.04px;top:486.22px;color:#94a3a5;width:5.94px">0</span>
<span class="t" style="left:203.91px;top:486.22px;color:#2aa198;width:11.88px">97</span>
<span class="t" style="left:215.79px;top:486.22px;color:#94a3a5;width:17.81px">704</span>
<span class="t" style="left:245.48px;top:486.22px;color:#2aa198;width:5.94px">1</span>
<span class="t" style="left:251.42px;top:486.22px;color:#94a3a5;width:17.81px">764</span>
<span class="t" style="left:281.11px;top:486.22px;color:#2aa198;width:5.94px">1</span>
<span class="t" style="left:287.04px;top:486.22px;color:#94a3a5;width:17.81px">592</span>
<span class="t" style="left:310.80px;top:486.22px;color:#94a3a5;width:5.94px">S</span>
<span class="t" style="left:328.61px;top:486.22px;color:#94a3a5;width:17.81px">0.0</span>
<span class="t" style="left:358.30px;top:486.22px;color:#94a3a5;width:17.81px">0.0</span>
<span class="t" style="left:387.99px;top:486.22px;color:#94a3a5;width:41.57px">0:00.00</span>
<span class="t" style="left:435.49px;top:486.22px;color:#94a3a5;width:95.01px">/sbin/lvmetad -f</span>
<span class="t" style="left:73.28px;top:498.81px;color:#94a3a5;width:17.81px">551</span>
<span class="t" style="left:97.03px;top:498.81px;color:#586e75;width:23.75px">root</span>
<span class="t" style="left:162.35px;top:498.81px;color:#94a3a5;width:11.88px">20</span>
<span class="t" style="left:192.04px;top:498.81px;color:#94a3a5;width:5.94px">0</span>
<span class="t" style="left:203.91px;top:498.81px;color:#2aa198;width:11.88px">47</span>
<span class="t" style="left:215.79px;top:498.81px;color:#94a3a5;width:17.81px">296</span>
<span class="t" style="left:245.48px;top:498.81px;color:#2aa198;width:5.94px">5</span>
<span class="t" style="left:251.42px;top:498.81px;color:#94a3a5;width:17.81px">532</span>
<span class="t" style="left:281.11px;top:498.81px;color:#2aa198;width:5.94px">3</span>
<span class="t" style="left:287.04px;top:498.81px;color:#94a3a5;width:17.81px">200</span>
<span class="t" style="left:310.80px;top:498.81px;color:#94a3a5;width:5.94px">S</span>
<span class="t" style="left:328.61px;top:498.81px;color:#94a3a5;width:17.81px">0.0</span>
<span class="t" style="left:358.30px;top:498.81px;color:#94a3a5;width:17.81px">0.0</span>
<span class="t" style="left:387.99px;top:498.81px;color:#94a3a5;width:41.57px">0:00.28</span>
<span class="t" style="left:435.49px;top:498.81px;color:#94a3a5;width:154.39px">/lib/systemd/systemd-udevd</span>
<span class="t" style="left:73.28px;top:511.41px;color:#94a3a5;width:17.81px">991</span>
<span class="t" style="left:97.03px;top:511.41px;color:#586e75;width:53.44px">systemd-r</span>
<span class="t" style="left:162.35px;top:511.41px;color:#94a3a5;width:11.88px">20</span>
<span class="t" style="left:192.04px;top:511.41px;color:#94a3a5;width:5.94px">0</span>
<span class="t" style="left:203.91px;top:511.41px;color:#2aa198;width:11.88px">71</span>
<span class="t" style="left:215.79px;top:511.41px;color:#94a3a5;width:17.81px">048</span>
<span class="t" style="left:245.48px;top:511.41px;color:#2aa198;width:5.94px">6</span>
<span class="t" style="left:251.42px;top:511.41px;color:#94a3a5;width:17.81px">436</span>
<span class="t" style="left:281.11px;top:511.41px;color:#2aa198;width:5.94px">5</span>
<span class="t" style="left:287.04px;top:511.41px;color:#94a3a5;width:17.81px">612</span>
<span class="t" style="left:310.80px;top:511.41px;color:#94a3a5;width:5.94px">S</span>
<span class="t" style="left:328.61px;top:511.41px;color:#94a3a5;width:17.81px">0.0</span>
<span class="t" style="left:358.30px;top:511.41px;color:#94a3a5;width:17.81px">0.0</span>
<span class="t" style="left:387.99px;top:511.41px;color:#94a3a5;width:41.57px">0:04.44</span>
<span class="t" style="left:435.49px;top:511.41px;color:#94a3a5;width:172.20px">/lib/systemd/systemd-resolved</span>
<span class="t" style="left:73.28px;top:524.00px;color:#94a3a5;width:17.81px">993</span>
<span class="t" style="left:97.03px;top:524.00px;color:#586e75;width:53.44px">systemd-t</span>
<span class="t" style="left:162.35px;top:524.00px;color:#94a3a5;width:11.88px">20</span>
<span class="t" style="left:192.04px;top:524.00px;color:#94a3a5;width:5.94px">0</span>
<span class="t" style="left:209.85px;top:524.00px;color:#2aa198;width:23.75px">140M</span>
<span class="t" style="left:245.48px;top:524.00px;color:#2aa198;width:5.94px">3</span>
<span class="t" style="left:251.42px;top:524.00px;color:#94a3a5;width:17.81px">356</span>
<span class="t" style="left:281.11px;top:524.00px;color:#2aa198;width:5.94px">2</span>
<span class="t" style="left:287.04px;top:524.00px;color:#94a3a5;width:17.81px">812</span>
<span class="t" style="left:310.80px;top:524.00px;color:#94a3a5;width:5.94px">S</span>
<span class="t" style="left:328.61px;top:524.00px;color:#94a3a5;width:17.81px">0.0</span>
<span class="t" style="left:358.30px;top:524.00px;color:#94a3a5;width:17.81px">0.0</span>
<span class="t" style="left:387.99px;top:524.00px;color:#94a3a5;width:41.57px">0:00.01</span>
<span class="t" style="left:435.49px;top:524.00px;color:#859900;width:178.14px">/lib/systemd/systemd-timesyncd</span>
<span class="t" style="left:73.28px;top:536.60px;color:#94a3a5;width:17.81px">992</span>
<span class="t" style="left:97.03px;top:536.60px;color:#586e75;width:53.44px">systemd-t</span>
<span class="t" style="left:162.35px;top:536.60px;color:#94a3a5;width:11.88px">20</span>
<span class="t" style="left:192.04px;top:536.60px;color:#94a3a5;width:5.94px">0</span>
<span class="t" style="left:209.85px;top:536.60px;color:#2aa198;width:23.75px">140M</span>
<span class="t" style="left:245.48px;top:536.60px;color:#2aa198;width:5.94px">3</span>
<span class="t" style="left:251.42px;top:536.60px;color:#94a3a5;width:17.81px">356</span>
<span class="t" style="left:281.11px;top:536.60px;color:#2aa198;width:5.94px">2</span>
<span class="t" style="left:287.04px;top:536.60px;color:#94a3a5;width:17.81px">812</span>
<span class="t" style="left:310.80px;top:536.60px;color:#94a3a5;width:5.94px">S</span>
<span class="t" style="left:328.61px;top:536.60px;color:#94a3a5;width:17.81px">0.0</span>
<span class="t" style="left:358.30px;top:536.60px;color:#94a3a5;width:17.81px">0.0</span>
<span class="t" style="left:387.99px;top:536.60px;color:#94a3a5;width:41.57px">0:00.06</span>
<span class="t" style="left:435.49px;top:536.60px;color:#94a3a5;width:178.14px">/lib/systemd/systemd-timesyncd</span>
<span class="t" style="left:61.40px;top:549.20px;color:#94a3a5;width:11.88px">F1</span>
<span class="t" style="left:73.28px;top:549.20px;color:#073642;width:23.75px">Help</span>
<span class="t" style="left:108.90px;top:549.20px;color:#94a3a5;width:11.88px">F2</span>
<span class="t" style="left:120.78px;top:549.20px;color:#073642;width:29.69px">Setup</span>
<span class="t" style="left:156.41px;top:549.20px;color:#94a3a5;width:11.88px">F3</span>
<span class="t" style="left:168.28px;top:549.20px;color:#073642;width:35.63px">Search</span>
<span class="t" style="left:203.91px;top:549.20px;color:#94a3a5;width:11.88px">F4</span>
<span class="t" style="left:215.79px;top:549.20px;color:#073642;width:35.63px">Filter</span>
<span class="t" style="left:251.42px;top:549.20px;color:#94a3a5;width:11.88px">F5</span>
<span class="t" style="left:263.29px;top:549.20px;color:#073642;width:23.75px">Tree</span>
<span class="t" style="left:298.92px;top:549.20px;color:#94a3a5;width:11.88px">F6</span>
<span class="t" style="left:310.80px;top:549.20px;color:#073642;width:35.63px">SortBy</span>
<span class="t" style="left:346.42px;top:549.20px;color:#94a3a5;width:11.88px">F7</span>
<span class="t" style="left:358.30px;top:549.20px;color:#073642;width:35.63px">Nice -</span>
<span class="t" style="left:393.93px;top:549.20px;color:#94a3a5;width:11.88px">F8</span>
<span class="t" style="left:405.80px;top:549.20px;color:#073642;width:35.63px">Nice +</span>
<span class="t" style="left:441.43px;top:549.20px;color:#94a3a5;width:11.88px">F9</span>
<span class="t" style="left:453.31px;top:549.20px;color:#073642;width:23.75px">Kill</span>
<span class="t" style="left:488.94px;top:549.20px;color:#94a3a5;width:17.81px">F10</span>
<span class="t" style="left:506.75px;top:549.20px;color:#073642;width:23.75px">Quit</span>
</body></html>
